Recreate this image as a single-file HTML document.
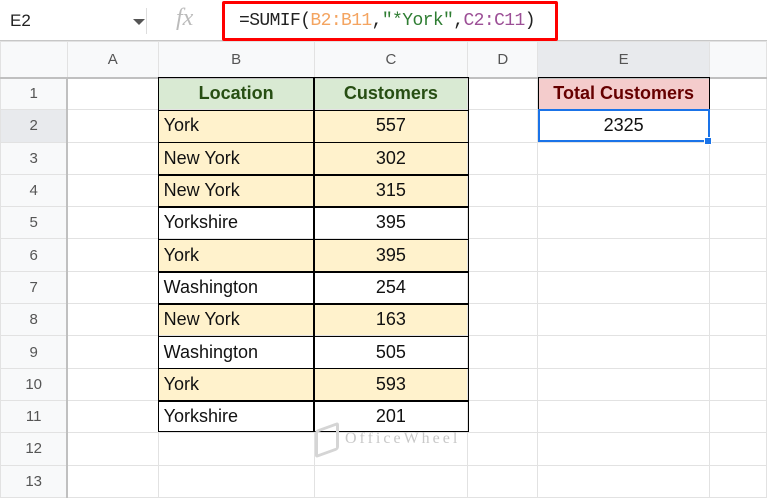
<!DOCTYPE html>
<html><head><meta charset="utf-8"><style>
*{margin:0;padding:0;box-sizing:border-box}
body{width:767px;height:477px;overflow:hidden;background:#fff;font-family:"Liberation Sans",Arial,sans-serif;position:relative}
.fb{position:absolute;left:0;top:0;width:767px;height:41px;background:#fff;border-bottom:1px solid #c7c7c7}
.nb{position:absolute;left:10px;top:11px;font-size:17px;color:#222}
.tri{position:absolute;left:133px;top:19px;width:0;height:0;border-left:6px solid transparent;border-right:6px solid transparent;border-top:6px solid #555}
.sep{position:absolute;left:146px;top:8px;width:1px;height:26px;background:#ddd}
.fx{position:absolute;left:176px;top:5px;font-family:"Liberation Serif",serif;font-style:italic;font-size:24px;color:#bbb}
.red{position:absolute;left:222px;top:1px;width:336px;height:40px;border:3px solid #f00;border-radius:2px;background:#fff}
.f{position:absolute;left:14px;top:7px;font-family:"Liberation Mono",monospace;font-size:18px;color:#222;letter-spacing:-0.6px}
table{position:absolute;left:0;top:41px;border-collapse:collapse;table-layout:fixed}
td{border:1px solid #e2e2e2;font-size:18px;color:#111;padding:0 5px;white-space:nowrap;overflow:hidden}
tr{height:32.3px}
tr.h{height:36px}
tr.h td{background:#f8f9fa;text-align:center;color:#555;font-size:15px;border-bottom:2px solid #c0c0c0}
td.rh{background:#f8f9fa;text-align:center;color:#555;font-size:15px;border-right:2px solid #c0c0c0}
.g{background:#d9ead3;color:#274e13;text-align:center;font-weight:bold}
.y{background:#fff2cc}
.c{text-align:center}
.pk{background:#f4cccc;color:#660000;font-weight:bold;text-align:center;padding:0}
.ol{position:absolute;border:1.5px solid #000;pointer-events:none}
.hl{position:absolute;height:1.5px;background:#000;left:158px;width:311px}
</style></head><body>
<div class="fb"><span class="nb">E2</span><div class="tri"></div><div class="sep"></div><span class="fx">fx</span>
<div class="red"><span class="f">=SUMIF(<span style="color:#f4a460">B2:B11</span>,<span style="color:#2e7d32">"*York"</span>,<span style="color:#9c4f96">C2:C11</span>)</span></div></div>
<table>
<colgroup><col style="width:67px"><col style="width:91px"><col style="width:156px"><col style="width:154px"><col style="width:70px"><col style="width:172px"><col style="width:57px"></colgroup>
<tr class="h"><td></td><td>A</td><td>B</td><td>C</td><td>D</td><td style="background:#e8eaed">E</td><td></td></tr>
<tr><td class="rh">1</td><td></td><td class="g">Location</td><td class="g">Customers</td><td></td><td class="pk">Total Customers</td><td></td></tr>
<tr><td class="rh" style="background:#e8eaed">2</td><td></td><td class="y">York</td><td class="y c">557</td><td></td><td class="c">2325</td><td></td></tr>
<tr><td class="rh">3</td><td></td><td class="y">New York</td><td class="y c">302</td><td></td><td></td><td></td></tr>
<tr><td class="rh">4</td><td></td><td class="y">New York</td><td class="y c">315</td><td></td><td></td><td></td></tr>
<tr><td class="rh">5</td><td></td><td>Yorkshire</td><td class="c">395</td><td></td><td></td><td></td></tr>
<tr><td class="rh">6</td><td></td><td class="y">York</td><td class="y c">395</td><td></td><td></td><td></td></tr>
<tr><td class="rh">7</td><td></td><td>Washington</td><td class="c">254</td><td></td><td></td><td></td></tr>
<tr><td class="rh">8</td><td></td><td class="y">New York</td><td class="y c">163</td><td></td><td></td><td></td></tr>
<tr><td class="rh">9</td><td></td><td>Washington</td><td class="c">505</td><td></td><td></td><td></td></tr>
<tr><td class="rh">10</td><td></td><td class="y">York</td><td class="y c">593</td><td></td><td></td><td></td></tr>
<tr><td class="rh">11</td><td></td><td>Yorkshire</td><td class="c">201</td><td></td><td></td><td></td></tr>
<tr><td class="rh">12</td><td></td><td></td><td></td><td></td><td></td><td></td></tr>
<tr><td class="rh">13</td><td></td><td></td><td></td><td></td><td></td><td></td></tr>
</table>
<div class="ol" style="left:158px;top:77px;width:311px;height:355px"></div>
<div style="position:absolute;left:313px;top:77px;width:1.5px;height:355px;background:#000"></div>
<div class="hl" style="top:109.5px"></div><div class="hl" style="top:141.8px"></div><div class="hl" style="top:174px"></div><div class="hl" style="top:206.4px"></div><div class="hl" style="top:238.7px"></div><div class="hl" style="top:271px"></div><div class="hl" style="top:303.3px"></div><div class="hl" style="top:335.6px"></div><div class="hl" style="top:367.9px"></div><div class="hl" style="top:400.2px"></div>
<div class="ol" style="left:538px;top:77px;width:172px;height:33px;border-bottom:none"></div>
<div style="position:absolute;left:538px;top:109px;width:172px;height:33px;border:2px solid #1a73e8"></div>
<div style="position:absolute;left:704px;top:137px;width:8px;height:8px;background:#1a73e8;border:1px solid #fff"></div>
<div style="position:absolute;left:345px;top:430px;font-family:'Liberation Serif',serif;font-size:16px;letter-spacing:3px;color:#c8c8c8">OfficeWheel</div>
<div style="position:absolute;left:315px;top:426px;width:24px;height:28px;border:3px solid #d5d5d5;border-radius:3px;transform:skewY(-20deg)"></div>
</body></html>
